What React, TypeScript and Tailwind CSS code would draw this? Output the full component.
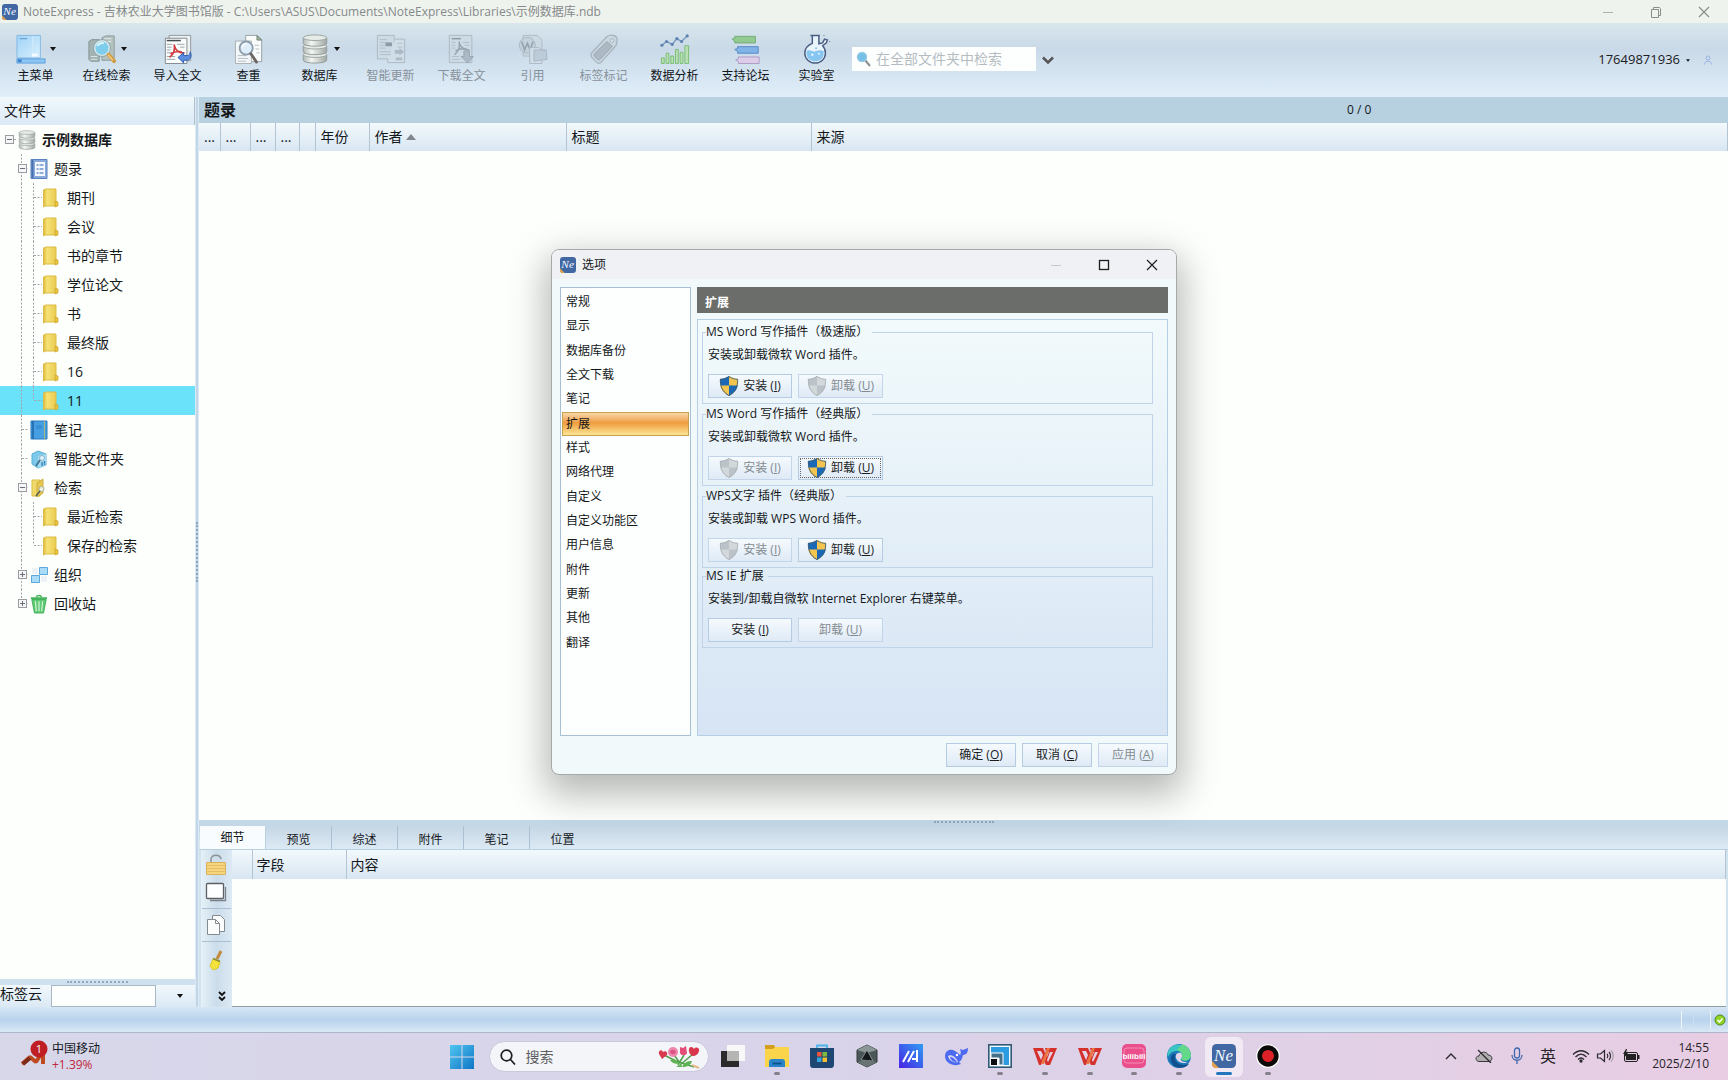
import { useState, type ReactNode } from 'react'
import clsx from 'clsx'

type IconProps = { className?: string }

/* ---------- Toolbar icons ---------- */

const MainMenuIcon = () => (
  <svg viewBox="0 0 32 32" className="size-[30px]">
    <defs>
      <linearGradient id="mm" x1="0" y1="0" x2="1" y2="1">
        <stop offset="0" stopColor="#9fd2f7" />
        <stop offset="1" stopColor="#d9f0fd" />
      </linearGradient>
    </defs>
    <path d="M1 1.500h25v24H1z" fill="url(#mm)" stroke="#83b8e2" />
    <path d="M18 2v23" stroke="#cfeafc" strokeWidth="1.500" />
    <path d="M4 5h8" stroke="#5d93c8" />
    <path d="M17 21h6v3h-6z" fill="#f7fdff" />
    <path d="M1 26.500h30V31H1z" fill="#8cc6f5" stroke="#5b9fdc" />
    <path d="M2 27h4v3H2z" fill="#3d83cb" />
  </svg>
)

const OnlineSearchIcon = () => (
  <svg viewBox="0 0 32 32" className="size-[30px]">
    <path d="M2 8l3-2h8v23H4l-2-2z" fill="#a3b3b3" stroke="#849494" />
    <path d="M16 4l4-2h9v24l-3 2H16z" fill="#b4c2c0" stroke="#8a9a98" />
    <path d="M18 5h8M18 8h8M4 24h7M4 27h7" stroke="#dfe8e6" />
    <circle cx="16" cy="15" r="8" fill="#7fcdec" stroke="#dbe8ea" strokeWidth="2" />
    <circle cx="16" cy="15" r="9" fill="none" stroke="#7b98a3" strokeWidth=".8" />
    <path d="M11 13a6 6 0 0 1 7-3" stroke="#d8f4fd" strokeWidth="2" fill="none" />
    <path d="M23 22l6 7" stroke="#d39a3d" strokeWidth="4" strokeLinecap="round" />
    <path d="M22.500 22l5 6" stroke="#f4d58b" strokeWidth="1.300" />
  </svg>
)

const ImportPdfIcon = () => (
  <svg viewBox="0 0 32 32" className="size-[30px]">
    <path d="M6.500 1.500h23v27h-23z" fill="#eef2f3" stroke="#8d9699" />
    <path d="M2.500 4.500h23v27h-23z" fill="#fbfdfd" stroke="#7c8589" />
    <path d="M4 7h15" stroke="#454b4e" strokeWidth="1.600" />
    <path d="M4 11h6M4 14h5M4 17h4M4 20h5M4 24h9M4 27h9M15 11h8M18 14h5" stroke="#98a0a4" />
    <path d="M12 11c1 6-1 11-5 14M12 12c1 5 5 9 11 8M8 21c4-2 8-3 12-2" stroke="#d13a3f" strokeWidth="1.700" fill="none" />
    <path d="M16 25l6-5v3h4c2 0 3-2 3-4 2 4 1 8-3 9h-4v3z" fill="#5b8ede" stroke="#2c57b0" />
  </svg>
)

const DuplicateIcon = () => (
  <svg viewBox="0 0 32 32" className="size-[30px]">
    <path d="M12.500 1.500h12l5 5v23h-17z" fill="#fafcfc" stroke="#93a0a3" />
    <path d="M24.500 1.500v5h5z" fill="#a4b7a6" stroke="#6f8071" />
    <path d="M1.500 7.500h17v24h-17z" fill="#f4f7f7" stroke="#a5aeb1" />
    <path d="M4 23h9M4 26h11M4 29h9M22 12h5M23 16h4M24 20h3" stroke="#b3bdc0" />
    <circle cx="13" cy="15" r="7" fill="#dfeefb" stroke="#8e9dad" strokeWidth="2" />
    <path d="M9 14a5 5 0 0 1 5-4" stroke="#fff" strokeWidth="1.500" fill="none" />
    <path d="M18 21l6 9" stroke="#6d6660" strokeWidth="3" strokeLinecap="round" />
  </svg>
)

const DatabaseIcon = ({ className = 'size-[30px]' }: IconProps) => (
  <svg viewBox="0 0 32 32" className={className}>
    <defs>
      <linearGradient id="cyl">
        <stop offset="0" stopColor="#b3bab5" />
        <stop offset=".35" stopColor="#f3f6f2" />
        <stop offset="1" stopColor="#a0a8a4" />
      </linearGradient>
    </defs>
    {[22, 13, 4].map((y) => (
      <g key={y}>
        <path d={`M3.5 ${y}v6c0 4 25 4 25 0v-6z`} fill="url(#cyl)" stroke="#929c99" />
        <ellipse cx="16" cy={y} rx="12.500" ry="3" fill="#e6ebe7" stroke="#9aa4a1" />
      </g>
    ))}
  </svg>
)

const SmartUpdateIcon = () => (
  <svg viewBox="0 0 32 32" className="size-[30px] opacity-80">
    <path d="M1.500 1.500h18v25h-18z" fill="#cddbe5" stroke="#a2b0bc" />
    <path d="M20.500 5.500h10v25h-18v-4" fill="#d2dfe8" stroke="#a2b0bc" />
    <path d="M4 6h8M4 9h6M4 12h5M4 15h6M4 19h12M4 22h12M23 10h5M23 14h5" stroke="#a9b6c1" />
    <path d="M10 9h7v4h-7z" fill="#7d8a96" />
    <path d="M20 17h5v-2l5 4-5 4v-2h-5zM21 25h7v3h-7z" fill="#a5b2be" />
  </svg>
)

const DownloadTextIcon = () => (
  <svg viewBox="0 0 32 32" className="size-[30px] opacity-80">
    <path d="M2.500 1.500h24v29h-24z" fill="#cddbe5" stroke="#a2b0bc" />
    <path d="M5 5h10" stroke="#7f8c97" strokeWidth="1.600" />
    <path d="M5 9h4M5 12h4M5 15h4M5 24h8M5 27h9M17 9h7M19 12h5" stroke="#a9b6c1" />
    <path d="M13 8c1 6-1 11-5 14M13 9c1 5 5 8 11 8M9 18c4-2 8-3 12-2" stroke="#8d99a5" strokeWidth="1.700" fill="none" />
    <path d="M18 18h6v6h4l-6 7-7-7h3z" fill="#a3b0bc" stroke="#8c9aa6" />
  </svg>
)

const CiteIcon = () => (
  <svg viewBox="0 0 32 32" className="size-[30px] opacity-80">
    <path d="M5.500 1.500h15l5 5v17h-20z" fill="#ccd9e3" stroke="#a5b2bd" />
    <circle cx="10" cy="12" r="8.500" fill="#c3d0db" stroke="#9fadb9" />
    <path d="M4 8l3 9 3-7 3 7 3-9" stroke="#8997a4" strokeWidth="1.800" fill="none" />
    <path d="M12.500 14.500h10l3 3v14h-13z" fill="#d5e0e8" stroke="#a2b0bc" />
    <path d="M17 17h13l1 10-14 2z" fill="#b9c8d4" stroke="#a0aebb" />
  </svg>
)

const TagIcon = () => (
  <svg viewBox="0 0 32 32" className="size-[30px] opacity-80">
    <path d="M3 20L19 3c3-3 10-2 11 2 0 3 0 6-2 8L13 30c-2 2-4 1-5 0l-5-5c-1-2-1-4 0-5z" fill="#cbd6df" stroke="#a0adb8" strokeWidth="1.500" />
    <path d="M6 21L19 8l6 5-13 14c-1 1-2 1-3 0l-3-3c-1-1-1-2 0-3z" fill="#a5b1bb" stroke="#8d9aa5" />
    <circle cx="24.500" cy="7" r="2" fill="#dce6ed" stroke="#98a6b2" />
  </svg>
)

const AnalyticsIcon = () => (
  <svg viewBox="0 0 32 32" className="size-[30px]">
    <path d="M2 12l5-4 6 3 5-6 5 3 6-6" stroke="#7294bd" strokeWidth="1.400" fill="none" />
    {[[2, 12], [7, 8], [13, 11], [18, 5], [23, 8], [29, 2]].map(([x, y]) => (
      <circle key={x} cx={x} cy={y} r="1.700" fill="#5f83b1" />
    ))}
    <path
      d="M1.500 25.500h3v6h-3zM6.500 20.500h3v11h-3zM11.500 23.500h3v8h-3zM16.500 16.500h3v15h-3zM21.500 19.500h3v12h-3zM26.500 12.500h4v19h-4z"
      fill="#b9e0b2"
      stroke="#78bd72"
    />
  </svg>
)

const ForumIcon = () => (
  <svg viewBox="0 0 32 32" className="size-[30px]">
    <path d="M1 5.500l3-1v-2h22v7H4v-2z" fill="#92ca90" stroke="#71ab76" />
    <path d="M4 16.500l3-1v-2h22v7H7v-2z" fill="#82b3e8" stroke="#5687c6" />
    <path d="M5 27.500l3-1v-2h22v7H8v-2z" fill="#dccde9" stroke="#ad98c4" />
  </svg>
)

const LabIcon = () => (
  <svg viewBox="0 0 32 32" className="size-[30px]">
    <path
      d="M9 1.500h10M11 2v8C6 12 3 16 3 20.500a11 10.500 0 0 0 22 0c0-3-1-6-3-8l4-3 1-3-3-1-2 4-4 1V2"
      fill="#e8f3fb"
      stroke="#4b5f82"
      strokeWidth="1.600"
    />
    <path d="M5 18c4-2 6 2 10 0 3-1 5-1 8 0 1 7-3 11-9 11S4 25 5 18z" fill="#88c6f2" />
    <circle cx="11" cy="22" r="1.300" fill="#e9f7ff" />
    <circle cx="15" cy="15" r="1" fill="#6fb3e6" />
    <circle cx="18" cy="21" r="1" fill="#e9f7ff" />
    <path d="M23 2l1-1M29 8h1" stroke="#58698a" />
  </svg>
)

const NeLogo = ({ className }: IconProps) => (
  <svg viewBox="0 0 24 24" className={className}>
    <rect width="24" height="24" rx="4.500" fill="#4168a3" />
    <path d="M0 17l7 7H4a4 4 0 0 1-4-4z" fill="#e4a44a" />
    <text x="11.500" y="17" textAnchor="middle" fontSize="17" fontStyle="italic" fontFamily="Liberation Serif, serif" fill="#f2f7ff">
      Ne
    </text>
  </svg>
)

/* ---------- Tree icons ---------- */

const FolderIcon = () => (
  <svg viewBox="0 0 16 20" className="h-5 w-4">
    <defs>
      <linearGradient id="fold">
        <stop offset="0" stopColor="#dcbc3e" />
        <stop offset=".3" stopColor="#f6e276" />
        <stop offset="1" stopColor="#e9cb51" />
      </linearGradient>
    </defs>
    <path d="M.500 2L3 1h10v17H2L.500 19z" fill="url(#fold)" stroke="#dcbb45" />
    <path d="M12 13l3 1v4l-3 1z" fill="#e8c340" stroke="#cfa42d" strokeWidth=".7" />
  </svg>
)

const RecordsIcon = () => (
  <svg viewBox="0 0 18 20" className="h-5 w-[18px]">
    <path d="M1 .500h16v19H1z" fill="#8aaadb" stroke="#5a80bd" />
    <path d="M5 3h10v14H5z" fill="#f4f9ff" />
    <path d="M2.500 1v18" stroke="#4871b2" strokeWidth="2" />
    <path d="M6.500 6h2M6.500 10h2M6.500 14h2M9.500 6h4M9.500 10h4M9.500 14h4" stroke="#6f93cb" strokeWidth="1.300" />
  </svg>
)

const NotesIcon = () => (
  <svg viewBox="0 0 18 20" className="h-5 w-[18px]">
    <path d="M1 1h16v18H1z" fill="#469fe3" stroke="#2b78bd" />
    <path d="M3 1v18" stroke="#1e64a5" strokeWidth="1.500" />
    <path d="M14.500 1v18" stroke="#a8b87d" />
    <path d="M6 6h6M6 8h6" stroke="#2f7fc6" />
  </svg>
)

const SmartFolderIcon = () => (
  <svg viewBox="0 0 18 20" className="h-5 w-[18px]">
    <path d="M2 5l6-3 8 3v11l-8 3-6-4z" fill="#7cc9ea" stroke="#56aed6" />
    <path d="M8 7l8-2v11l-8 3z" fill="#a5dcf3" />
    <circle cx="12" cy="9" r="2.500" fill="#dff3fb" stroke="#8fb6ca" />
    <path d="M10 11l-4 6" stroke="#43708b" strokeWidth="1.700" />
    <path d="M12 13v4M14.500 12v4" stroke="#3d87ba" strokeWidth="1.500" />
  </svg>
)

const SearchFolderIcon = () => (
  <svg viewBox="0 0 18 20" className="h-5 w-[18px]">
    <path d="M2 2h8v16H2z" fill="#f0da6c" stroke="#d9bc48" />
    <path d="M7 5l6-4v14l-6 4z" fill="#e5c850" stroke="#cfae3b" />
    <circle cx="11.500" cy="11" r="2.500" fill="#e9efdf" stroke="#a9b19a" />
    <path d="M10 13l-4 5" stroke="#55605a" strokeWidth="1.500" />
  </svg>
)

const OrgIcon = () => (
  <svg viewBox="0 0 18 20" className="h-5 w-[18px]">
    <path d="M9.500 2.500h8v7h-8zM1.500 10.500h8v7h-8z" fill="#a9dcf8" stroke="#5fa8dc" />
    <path d="M2 3h6v6H2zM11 11h6v6h-6z" fill="#edf2f6" />
  </svg>
)

const TrashIcon = () => (
  <svg viewBox="0 0 20 22" className="h-[22px] w-[18px]">
    <path d="M2 6h16l-3 15H5z" fill="#5fc973" stroke="#3bab53" />
    <path d="M1 4.500h18M7 3c1-2 5-2 6 0" stroke="#45b55c" strokeWidth="1.800" fill="none" />
    <path d="M6 8l1 11M10 8v11M14 8l-1 11" stroke="#d5f5d9" strokeWidth="1.300" />
  </svg>
)

const MagnifierIcon = () => (
  <svg viewBox="0 0 16 16" className="h-4 w-4 shrink-0">
    <path d="M9 9l5 6" stroke="#8d8f90" strokeWidth="2" />
    <circle cx="6" cy="6" r="4.500" fill="#76bfe6" stroke="#94c9e4" strokeWidth="1.500" />
  </svg>
)

const ShieldIcon = ({ muted }: { muted?: boolean }) => {
  const blue = muted ? '#bcc3c8' : '#1b69b6'
  const gold = muted ? '#d3d8db' : '#f4c54e'
  return (
    <svg viewBox="0 0 20 20" className="h-5 w-5 shrink-0">
      <path d="M10 0C7 2 4 3 1 3c0 8 2 13 9 17z" fill={blue} />
      <path d="M10 0c3 2 6 3 9 3 0 8-2 13-9 17z" fill={gold} />
      <path d="M1.200 9.500H10V20C5 17 2 14 1.200 9.500z" fill={gold} />
      <path d="M18.800 9.500H10V20c5-3 8-6 8.800-10.500z" fill={blue} />
      <path d="M10 .500C7 2.500 4 3.300 1.300 3.300c0 7 1.700 12.200 8.700 16.200 7-4 8.700-9.200 8.700-16.200C16 3.300 13 2.500 10 .500z" fill="none" stroke={muted ? '#aab2b8' : '#3e5b70'} strokeWidth=".9" />
    </svg>
  )
}

/* ---------- Data ---------- */

interface Tool {
  label: string
  icon: ReactNode
  menu?: boolean
  disabled?: boolean
}

const tools: Tool[] = [
  { label: '主菜单', icon: <MainMenuIcon />, menu: true },
  { label: '在线检索', icon: <OnlineSearchIcon />, menu: true },
  { label: '导入全文', icon: <ImportPdfIcon /> },
  { label: '查重', icon: <DuplicateIcon /> },
  { label: '数据库', icon: <DatabaseIcon />, menu: true },
  { label: '智能更新', icon: <SmartUpdateIcon />, disabled: true },
  { label: '下载全文', icon: <DownloadTextIcon />, disabled: true },
  { label: '引用', icon: <CiteIcon />, disabled: true },
  { label: '标签标记', icon: <TagIcon />, disabled: true },
  { label: '数据分析', icon: <AnalyticsIcon /> },
  { label: '支持论坛', icon: <ForumIcon /> },
  { label: '实验室', icon: <LabIcon /> },
]

interface Node {
  label: string
  level: 0 | 1 | 2
  icon: ReactNode
  box?: '+' | '-'
  last?: boolean
}

const nodes: Node[] = [
  { label: '示例数据库', level: 0, icon: <DatabaseIcon className="h-5 w-5" />, box: '-' },
  { label: '题录', level: 1, icon: <RecordsIcon />, box: '-' },
  { label: '期刊', level: 2, icon: <FolderIcon /> },
  { label: '会议', level: 2, icon: <FolderIcon /> },
  { label: '书的章节', level: 2, icon: <FolderIcon /> },
  { label: '学位论文', level: 2, icon: <FolderIcon /> },
  { label: '书', level: 2, icon: <FolderIcon /> },
  { label: '最终版', level: 2, icon: <FolderIcon /> },
  { label: '16', level: 2, icon: <FolderIcon /> },
  { label: '11', level: 2, icon: <FolderIcon />, last: true },
  { label: '笔记', level: 1, icon: <NotesIcon /> },
  { label: '智能文件夹', level: 1, icon: <SmartFolderIcon /> },
  { label: '检索', level: 1, icon: <SearchFolderIcon />, box: '-' },
  { label: '最近检索', level: 2, icon: <FolderIcon /> },
  { label: '保存的检索', level: 2, icon: <FolderIcon />, last: true },
  { label: '组织', level: 1, icon: <OrgIcon />, box: '+' },
  { label: '回收站', level: 1, icon: <TrashIcon />, box: '+', last: true },
]

const sections = [
  '常规', '显示', '数据库备份', '全文下载', '笔记', '扩展', '样式', '网络代理',
  '自定义', '自定义功能区', '用户信息', '附件', '更新', '其他', '翻译',
]

const plugins = [
  { title: 'MS Word 写作插件（极速版）', text: '安装或卸载微软 Word 插件。', shield: true, install: true, remove: false },
  { title: 'MS Word 写作插件（经典版）', text: '安装或卸载微软 Word 插件。', shield: true, install: false, remove: true, focus: true },
  { title: 'WPS文字 插件（经典版）', text: '安装或卸载 WPS Word 插件。', shield: true, install: false, remove: true },
  { title: 'MS IE 扩展', text: '安装到/卸载自微软 Internet Explorer 右键菜单。', shield: false, install: true, remove: false },
]

const columns = [
  { label: '...', width: 'w-[21px]' },
  { label: '...', width: 'w-[30px]' },
  { label: '...', width: 'w-[25px]' },
  { label: '...', width: 'w-[24px]' },
  { label: '', width: 'w-4' },
  { label: '年份', width: 'w-[54px]' },
  { label: '作者', width: 'w-[197px]', sorted: true },
  { label: '标题', width: 'w-[245px]' },
  { label: '来源', width: '' },
]

const tabs = ['细节', '预览', '综述', '附件', '笔记', '位置']

/* ---------- Shared bits ---------- */

const Caret = () => (
  <svg viewBox="0 0 6 4" className="h-1 w-1.5 shrink-0">
    <path d="M0 0h6L3 4z" fill="#111" />
  </svg>
)

const WindowButtons = ({ dialog }: { dialog?: boolean }) => {
  const stroke = dialog ? '#1c1c1c' : '#8b8d8b'
  return (
    <div className="flex items-center">
      <button aria-label="最小化" className="flex w-12 justify-center">
        <svg viewBox="0 0 12 12" className="h-3 w-3">
          <path d="M1 6.500h10" stroke={dialog ? '#c5c8ca' : '#aeb1ae'} />
        </svg>
      </button>
      <button aria-label="最大化" className="flex w-12 justify-center">
        <svg viewBox="0 0 12 12" className="h-3 w-3" fill="none" stroke={stroke}>
          {dialog ? (
            <rect x="1.500" y="1.500" width="9" height="9" strokeWidth="1.300" />
          ) : (
            <path d="M1.500 3.500h7v8h-7zM3.500 3V1.500h6l1 1v7H9" />
          )}
        </svg>
      </button>
      <button aria-label="关闭" className="flex w-12 justify-center">
        <svg viewBox="0 0 12 12" className="h-3 w-3">
          <path d="M1 1l10 10M11 1L1 11" stroke={stroke} strokeWidth="1.200" />
        </svg>
      </button>
    </div>
  )
}

const Keyed = ({ text, hotkey }: { text: string; hotkey: string }) => (
  <span>
    {text} (<span className="underline">{hotkey}</span>)
  </span>
)

const PushButton = ({ text, hotkey, disabled, width, children }: {
  text: string
  hotkey: string
  disabled?: boolean
  width: string
  children?: ReactNode
}) => (
  <button
    disabled={disabled}
    className={clsx(
      'flex h-6 items-center justify-center gap-1 border border-[#b5cbe2] bg-linear-to-b from-[#f5fafd] to-[#dfeaf6] leading-4 text-[#1b1d1f] disabled:border-[#c3d5e8] disabled:text-[#848b90]',
      width
    )}
  >
    {children}
    <Keyed text={text} hotkey={hotkey} />
  </button>
)

/* ---------- Main window ---------- */

const Toolbar = () => (
  <div className="flex h-[74px] shrink-0 bg-linear-to-b from-[#d8e6ec] via-[#c9d9e7] via-35% to-[#e0effa]">
    {tools.map((tool) => (
      <button
        key={tool.label}
        disabled={tool.disabled}
        className="flex w-[71px] flex-col items-center gap-1 pt-[11px] leading-4 text-[#101418] disabled:text-[#87919a]"
      >
        <span className="flex items-center gap-1">
          {tool.icon}
          {tool.menu && <Caret />}
        </span>
        {tool.label}
      </button>
    ))}
    <div className="mt-6 flex h-6 w-[184px] items-center gap-1 bg-[#fdfffe] px-1">
      <MagnifierIcon />
      <input
        aria-label="在全部文件夹中检索"
        placeholder="在全部文件夹中检索"
        className="w-full bg-transparent text-sm leading-5 outline-none placeholder:text-[#b4bcc2]"
      />
    </div>
    <button aria-label="检索选项" className="ml-1.5 flex items-center">
      <svg viewBox="0 0 12 8" className="h-2 w-3">
        <path d="M1 1.500l5 5 5-5" stroke="#555" strokeWidth="2.500" fill="none" />
      </svg>
    </button>
    <button className="ml-auto flex items-center gap-1.5 text-[13px] text-[#1c2024]">
      17649871936
      <svg viewBox="0 0 6 4" className="h-[3px] w-1"><path d="M0 0h6L3 4z" fill="#111" /></svg>
    </button>
    <button aria-label="账户" className="mr-4 ml-3.5 flex items-center">
      <svg viewBox="0 0 8 10" className="h-2.5 w-2" fill="none" stroke="#9ab3e6">
        <circle cx="4" cy="3" r="2" />
        <path d="M.500 9.500C1 5 7 5 7.500 9.500" />
      </svg>
    </button>
  </div>
)

const TreeGuide = ({ node, index }: { node: Node; index: number }) => {
  const { level, box, last } = node
  const width = level === 0 ? 17 : level === 1 ? 30 : 43
  const boxX = level === 0 ? 5 : 18
  const trunkEnd = index === nodes.length - 1 ? 14 : 29
  return (
    <svg width={width} height={29} viewBox={`0 0 ${width} 29`} className="shrink-0" fill="none">
      <g stroke="#a3a3a9" strokeDasharray="2 1.500">
        {level > 0 && <path d={`M21.500 0V${trunkEnd}`} />}
        {level === 1 && <path d="M22 14.500h7" />}
        {level === 0 && <path d="M14 14.500h3" />}
        {level === 2 && <path d={`M33.500 0V${last ? 14 : 29}M34 14.500h8`} />}
      </g>
      {box && (
        <g stroke="#9a9ca1">
          <rect x={boxX + 0.5} y="10.500" width="8" height="8" fill="#f5f6f8" />
          <path d={`M${boxX + 2} 14.500h5`} stroke="#6b6f75" />
          {box === '+' && <path d={`M${boxX + 4.5} 12v5`} stroke="#6b6f75" />}
        </g>
      )}
    </svg>
  )
}

const Sidebar = () => {
  const [selected, setSelected] = useState('11')
  return (
    <aside className="flex w-[195px] shrink-0 flex-col">
      <div className="flex h-7 shrink-0 items-center border-r border-[#aebfce] bg-linear-to-b from-[#f1f8fc] to-[#dbe9f5] pl-1 text-sm">
        文件夹
      </div>
      <ul className="flex-1 overflow-hidden bg-[#fdfffc] text-sm">
        {nodes.map((node, index) => (
          <li key={node.label}>
            <button
              onClick={() => setSelected(node.label)}
              className={clsx(
                'flex h-[29px] w-full items-center text-left leading-5',
                node.label === selected && 'bg-[#6ae2f9]',
                node.level === 0 && 'font-bold'
              )}
            >
              <TreeGuide node={node} index={index} />
              <span className={clsx('flex shrink-0 items-center', node.level === 0 ? 'w-[25px]' : 'w-6')}>{node.icon}</span>
              {node.label}
            </button>
          </li>
        ))}
      </ul>
      <div className="flex h-1.5 items-center justify-center bg-[#cfe1ee]">
        <span className="w-[61px] border-t-2 border-dotted border-[#92aac0]" />
      </div>
      <div className="flex h-[22px] items-center bg-linear-to-b from-[#f1f8fc] to-[#dbe9f5]">
        <label htmlFor="tag-cloud" className="w-[51px] pb-1 text-sm leading-4">标签云</label>
        <input id="tag-cloud" className="h-[22px] w-[105px] border border-[#a9b7c4] bg-[#fdfffe] px-1 outline-none" />
        <button aria-label="展开标签云" className="flex h-full flex-1 items-center justify-center pl-2"><Caret /></button>
      </div>
    </aside>
  )
}

const DetailTools = () => (
  <div className="flex w-[31px] shrink-0 flex-col items-center bg-linear-to-r from-[#e6f1f8] via-[#cbdcea] to-[#dceaf4] pr-px">
    <button aria-label="锁定" className="py-1">
      <svg viewBox="0 0 22 22" className="h-[22px] w-[22px]">
        <path d="M6 9V5c1-5 9-5 10 0" stroke="#8c9399" strokeWidth="1.500" fill="none" />
        <path d="M1.500 8.500h19v12h-19z" fill="#f6d67c" stroke="#d8b25c" />
        <path d="M2 11.500h18M2 14.500h18M2 17.500h18" stroke="#e6bd64" />
      </svg>
    </button>
    <button aria-label="窗口" className="pt-0.5 pb-1.5">
      <svg viewBox="0 0 22 20" className="h-5 w-[22px]">
        <path d="M5 18.500h15.500V5" stroke="#7c8086" strokeWidth="1.300" fill="none" />
        <rect x="1.500" y="1.500" width="17" height="15" rx="1" fill="#fdfeff" stroke="#5c6066" strokeWidth="1.300" />
      </svg>
    </button>
    <hr className="w-[29px] border-[#aabfd2]" />
    <button aria-label="复制" className="py-1.5">
      <svg viewBox="0 0 20 20" className="h-5 w-5" fill="#fbfdfd" stroke="#868b90">
        <path d="M6.500.500h8l4 4v12h-12z" />
        <path d="M1.500 4.500h8l4 4v11h-12z" />
        <path d="M9.500 4.500v4h4" fill="none" />
      </svg>
    </button>
    <hr className="w-[29px] border-[#aabfd2]" />
    <button aria-label="清除" className="py-2">
      <svg viewBox="0 0 14 20" className="h-5 w-3.5">
        <path d="M12 1L8 9" stroke="#c08b3c" strokeWidth="3" />
        <path d="M4 9l7 3-2 6-5 2-3-4z" fill="#f3e23c" stroke="#d9c626" />
        <path d="M4 8.500l7 3" stroke="#8e8a2b" strokeWidth="1.500" />
      </svg>
    </button>
    <button aria-label="更多" className="mt-auto mb-1.5 pl-3">
      <svg viewBox="0 0 8 10" className="h-2.5 w-2" fill="none" stroke="#111" strokeWidth="1.800">
        <path d="M1 1l3 3 3-3M1 6l3 3 3-3" />
      </svg>
    </button>
  </div>
)

const DetailPane = () => {
  const [active, setActive] = useState('细节')
  return (
    <section className="flex h-[187px] shrink-0 flex-col border-t border-[#c6d8e6] bg-[#d2e3f0]">
      <div className="flex h-[5px] shrink-0 items-start justify-center bg-[#c4d7e6]">
        <span className="w-[60px] border-t-2 border-dotted border-[#8fa6bb]" />
      </div>
      <div role="tablist" className="flex h-6 shrink-0 border-b border-[#b6cfe1] bg-linear-to-b from-[#c5d6e4] to-[#dceaf5] pl-px">
        {tabs.map((tab) => (
          <button
            key={tab}
            role="tab"
            aria-selected={tab === active}
            onClick={() => setActive(tab)}
            className={clsx(
              'w-[66px] border-r leading-4',
              tab === active ? 'border-[#b6cfe1] bg-[#f8fcfe]' : 'border-[#abc0d3] pt-1 last:border-transparent'
            )}
          >
            {tab}
          </button>
        ))}
      </div>
      <div className="flex min-h-0 flex-1 pr-0.5 pl-0.5">
        <DetailTools />
        <div className="flex-1 border-b border-[#8f9aa3] bg-[#fdfffc]">
          <table className="w-full table-fixed text-sm leading-5">
            <thead>
              <tr className="h-[29px] bg-linear-to-b from-[#f3f9fc] to-[#d8e6f2] text-left">
                <th className="w-5 border-r border-[#b4c4d2]" />
                <th className="w-[94px] border-r border-[#b4c4d2] pl-1 font-normal">字段</th>
                <th className="border-r border-[#b4c4d2] pl-1 font-normal">内容</th>
              </tr>
            </thead>
          </table>
        </div>
      </div>
    </section>
  )
}

/* ---------- Options dialog ---------- */

const OptionsDialog = () => {
  const [section, setSection] = useState('扩展')
  return (
    <div className="pointer-events-none absolute inset-0 flex justify-center pt-[249px]">
      <div
        role="dialog"
        aria-labelledby="options-title"
        className="pointer-events-auto flex h-[526px] w-[626px] flex-col overflow-hidden rounded-lg border border-[#a4aaaa] bg-[#f2f9fb] shadow-[0_14px_36px_6px_rgba(0,0,0,0.28)]"
      >
        <div className="flex h-[29px] shrink-0 items-center gap-1.5 bg-[#eff1f4] pl-2">
          <NeLogo className="h-4 w-4" />
          <h2 id="options-title" className="leading-4">选项</h2>
          <div className="ml-auto"><WindowButtons dialog /></div>
        </div>
        <div className="flex min-h-0 flex-1 gap-1.5 px-2 pt-2">
          <nav className="w-[131px] shrink-0 border border-[#a9bfd4] bg-[#fdfffe] px-px pt-0.5">
            <ul className="grid h-[365px] auto-rows-fr">
              {sections.map((item) => (
                <li key={item} className="flex">
                  <button
                    onClick={() => setSection(item)}
                    className={clsx(
                      'w-full border px-[3px] text-left leading-4',
                      item === section
                        ? 'border-[#c8a14d] bg-linear-to-b from-[#f8d7a8] via-[#ee9c3c] via-45% to-[#fbe694]'
                        : 'border-transparent'
                    )}
                  >
                    {item}
                  </button>
                </li>
              ))}
            </ul>
          </nav>
          <div className="flex min-w-0 flex-1 flex-col gap-1.5">
            <h3 className="flex h-[26px] shrink-0 items-center bg-[#6b6d6a] pt-1.5 pl-2 font-bold text-white">{section}</h3>
            <div className="flex-1 border border-[#b7cfe5] bg-linear-to-b from-[#f2fafb] to-[#d6e4f4] pt-1 pr-[14px] pl-1">
              {plugins.map((plugin) => (
                <fieldset key={plugin.title} className="mb-0.5 h-20 border border-[#bfd4e8] pl-[5px] last:-mt-0.5">
                  <legend className="-ml-0.5 pr-1 leading-4">{plugin.title}</legend>
                  <p className="mt-[5px] leading-5">{plugin.text}</p>
                  <div className="mt-[9px] flex gap-1.5">
                    <PushButton text="安装" hotkey="I" width="w-[84px]" disabled={!plugin.install}>
                      {plugin.shield && <ShieldIcon muted={!plugin.install} />}
                    </PushButton>
                    <span className={clsx(plugin.focus && 'outline outline-dotted outline-[#666] -outline-offset-3')}>
                      <PushButton text="卸载" hotkey="U" width="w-[85px]" disabled={!plugin.remove}>
                        {plugin.shield && <ShieldIcon muted={!plugin.remove} />}
                      </PushButton>
                    </span>
                  </div>
                </fieldset>
              ))}
            </div>
          </div>
        </div>
        <div className="flex shrink-0 justify-end gap-1.5 px-2 pt-[7px] pb-[7px]">
          <PushButton text="确定" hotkey="O" width="w-[70px]" />
          <PushButton text="取消" hotkey="C" width="w-[70px]" />
          <PushButton text="应用" hotkey="A" width="w-[70px]" disabled />
        </div>
      </div>
    </div>
  )
}

/* ---------- Taskbar ---------- */

const WpsIcon = () => (
  <svg viewBox="0 0 24 24" className="h-6 w-6">
    <path d="M0 4h10l4 9 2-5h-3l-1-4h12l-7 17h-4l-3-6-2 6H6z" fill="#d4312d" />
    <path d="M4 7l4 9 2-5-2-4zM17 8l-3 8 1 2 5-10z" fill="#e5d3e8" />
    <path d="M8 20l6-16h3l-6 16z" fill="#ea7442" />
  </svg>
)

const apps: { name: string; running?: boolean; active?: boolean; icon: ReactNode }[] = [
  {
    name: '任务视图',
    icon: (
      <svg viewBox="0 0 24 24" className="h-6 w-6">
        <rect x="6" y="1" width="18" height="16" fill="#f8f8f8" />
        <rect x="0" y="7" width="18" height="16" fill="#2b2b2b" />
        <rect x="6" y="7" width="12" height="10" fill="#b5b5b3" />
      </svg>
    ),
  },
  {
    name: '文件资源管理器',
    running: true,
    icon: (
      <svg viewBox="0 0 24 24" className="h-6 w-6">
        <path d="M0 1h9l2 3h10v4H0z" fill="#d39c22" />
        <path d="M0 5h8l2-2h14v20H0z" fill="#fad44b" />
        <path d="M4 23v-5c0-2 1-3 3-3h10c2 0 3 1 3 3v5z" fill="#2a84c9" />
        <path d="M7.500 19.500h9" stroke="#0f4f8c" strokeWidth="1.800" />
      </svg>
    ),
  },
  {
    name: 'Microsoft Store',
    icon: (
      <svg viewBox="0 0 24 24" className="h-6 w-6">
        <path d="M7 5V1.500h10V5" fill="none" stroke="#4bb5e8" strokeWidth="1.800" />
        <path d="M0 4h24v16c0 3-1 4-3 4H3c-2 0-3-1-3-4z" fill="#1e4773" />
        <path d="M7 8h4.500v4.500H7z" fill="#e8543a" />
        <path d="M12.500 8H17v4.500h-4.500z" fill="#7db93c" />
        <path d="M7 13.500h4.500V18H7z" fill="#36a3df" />
        <path d="M12.500 13.500H17V18h-4.500z" fill="#f4bd32" />
      </svg>
    ),
  },
  {
    name: '奥创中心',
    icon: (
      <svg viewBox="0 0 24 24" className="h-6 w-6">
        <path d="M12 1l10 5v12l-10 5-10-5V6z" fill="#4a5657" stroke="#303a3b" />
        <path d="M12 1l10 5-10 3L2 6z" fill="#8b9796" />
        <path d="M12 6l6 11-12-1z" fill="#15191a" stroke="#98a4a3" strokeWidth=".8" />
        <path d="M2 18l10-2 10 2-10 5z" fill="#687473" />
      </svg>
    ),
  },
  {
    name: 'MyASUS',
    icon: (
      <svg viewBox="0 0 24 24" className="h-6 w-6">
        <defs>
          <linearGradient id="asus" x1="0" y1="1" x2="1" y2="0">
            <stop offset="0" stopColor="#4a22e4" />
            <stop offset="1" stopColor="#2e9df4" />
          </linearGradient>
        </defs>
        <rect width="24" height="24" fill="url(#asus)" />
        <path d="M4 18L10 7M9 18l6-11M13 15h4M18 6v12" stroke="#fff" strokeWidth="2" />
      </svg>
    ),
  },
  {
    name: 'DeepSeek',
    icon: (
      <svg viewBox="0 0 24 24" className="h-6 w-6">
        <path d="M1 12c0-5 5-8 10-5 2 1 4 3 5 4 1-1 1-4 0-6l3 1 5-2c0 5-2 7-5 7-1 4-2 6-4 7l2 2c-6 3-16 0-16-8z" fill="#4d6bf0" />
        <path d="M4 12c3-2 8 1 10 6-4 1-9-1-10-6z" fill="#d9d6f2" />
        <path d="M6 13c3 0 5 2 7 5-3 0-6-1-7-5z" fill="#4d6bf0" />
        <circle cx="13" cy="11" r="1.200" fill="#fff" />
      </svg>
    ),
  },
  {
    name: '屏幕工具',
    running: true,
    icon: (
      <svg viewBox="0 0 24 24" className="h-6 w-6">
        <rect x=".8" y=".8" width="22.400" height="22.400" fill="#f5fbfe" stroke="#2f5a76" strokeWidth="1.600" />
        <path d="M3 3h18v18h-6V9H3z" fill="#2d9be0" />
        <path d="M3 9h12v12h-4v-7H3z" fill="#466f8a" stroke="#fff" />
        <rect x="3" y="15" width="6" height="6" fill="#0b0d10" />
      </svg>
    ),
  },
  { name: 'WPS Office', running: true, icon: <WpsIcon /> },
  { name: 'WPS 文字', running: true, icon: <WpsIcon /> },
  {
    name: '哔哩哔哩',
    running: true,
    icon: (
      <svg viewBox="0 0 24 24" className="h-6 w-6">
        <rect width="24" height="24" rx="5" fill="#ea4f8b" />
        <rect x="2" y="4" width="20" height="15" rx="3" fill="none" stroke="#f58bb4" />
        <text x="12" y="15" textAnchor="middle" fontSize="8" fontWeight="bold" fontFamily="Liberation Sans, sans-serif" fill="#fff">
          bilibili
        </text>
      </svg>
    ),
  },
  {
    name: 'Microsoft Edge',
    running: true,
    icon: (
      <svg viewBox="0 0 24 24" className="h-6 w-6">
        <circle cx="12" cy="12" r="12" fill="#1b79b8" />
        <path d="M1 8C4-2 20-2 23.500 9c1 5-3 8-7 7-2 0-3-1-2-2 2-4-1-7-5-7-4 0-7 2-8.500 6C0 11 .400 9 1 8z" fill="#3cc4c6" />
        <path d="M15 .500c5 1 9 6 9 11 0 4-4 6-8 5-1-1-2-1-1.500-2C17 10 13 6 10 6c2-3 4-4 5-5.500z" fill="#63d888" />
        <path d="M9 10c-3 4 0 11 8 11 2 0 4-1 5-1-5 6-16 5-18-3-1-5 1-7 5-7z" fill="#11508f" />
        <path d="M14 9c-4-1-6 2-5 5s4 5 9 5l3-1c-3 0-6 0-7-2-1-1 1-2 1-4 0-1 0-2-1-3z" fill="#e1d6ea" />
      </svg>
    ),
  },
  { name: 'NoteExpress', running: true, active: true, icon: <NeLogo className="h-6 w-6" /> },
  {
    name: '录屏',
    running: true,
    icon: (
      <svg viewBox="0 0 24 24" className="h-6 w-6">
        <circle cx="12" cy="12" r="11.300" fill="#0c0909" stroke="#fdfdfd" strokeWidth="1.300" />
        <circle cx="12" cy="12" r="6" fill="#dd2127" />
      </svg>
    ),
  },
]

const Bouquet = () => (
  <svg viewBox="0 0 42 24" className="h-6 w-[42px] shrink-0">
    <path d="M6 10l12 6 18 6M16 10l6 8M26 10l-6 10M35 9L22 20" stroke="#4f9f4b" strokeWidth="1.500" fill="none" />
    <path d="M12 15c5-1 8 1 9 4-4 0-7-1-9-4zM24 22c2-5 6-6 10-6-1 4-5 6-10 6zM18 22l5-3 1 3z" fill="#5fb354" />
    <path d="M1 9c-1-4 3-5 4-2 3-2 5 1 4 3l-5 4z" fill="#d83b4f" />
    <circle cx="15" cy="7" r="5" fill="#ee87ab" />
    <path d="M12 7c0-3 5-3 6 0-1 3-5 3-6 0z" fill="#db5485" />
    <path d="M22 2l3 1 3-2 1 7c-1 3-6 3-7 0z" fill="#e34d77" />
    <path d="M31 4c1-3 4-2 5 0 2-3 6-1 5 2-1 4-4 5-6 5s-5-4-4-7z" fill="#d9364e" />
    <path d="M34 20l7 3" stroke="#e3b98b" strokeWidth="2" />
  </svg>
)

const Taskbar = () => (
  <footer className="grid h-12 shrink-0 grid-cols-[1fr_auto_1fr] border-t border-[#adb6ca] bg-linear-to-r from-[#d8d7ea] via-[#d9d3e9] via-50% to-[#e8cde3]">
    <button className="flex items-center pl-[21px] text-left">
      <svg viewBox="0 0 28 28" className="mb-1.5 h-7 w-7 shrink-0">
        <path d="M1 24l8-7 6 5 7-11v13" fill="none" stroke="#bf4a20" strokeWidth="4" strokeLinejoin="bevel" />
        <path d="M2 24l7-6" stroke="#7d2a17" strokeWidth="4" />
        <circle cx="18" cy="9" r="8.500" fill="#bf1e25" />
        <text x="18" y="13" textAnchor="middle" fontSize="11" fontFamily="Open Sans, sans-serif" fill="#fff">1</text>
      </svg>
      <span className="flex flex-col pl-[3px] leading-4">
        <span>中国移动</span>
        <span className="text-[#c0273c]">+1.39%</span>
      </span>
    </button>

    <div className="flex items-center pl-3">
      <button aria-label="开始">
        <svg viewBox="0 0 24 24" className="h-6 w-6">
          <defs>
            <linearGradient id="win" x1="0" y1="0" x2="1" y2="1">
              <stop offset="0" stopColor="#4fc6f1" />
              <stop offset="1" stopColor="#0f75c5" />
            </linearGradient>
          </defs>
          <path d="M0 0h11.500v11.500H0zM12.500 0H24v11.500H12.500zM0 12.500h11.500V24H0zM12.500 12.500H24V24H12.500z" fill="url(#win)" />
        </svg>
      </button>
      <label className="ml-[15px] flex h-[31px] w-[220px] shrink-0 items-center rounded-full border border-[#cbc8dc] bg-[#f4f5f8] pr-2 pl-2.5">
        <svg viewBox="0 0 16 16" className="h-4 w-4 shrink-0" fill="none" stroke="#1d1d1f" strokeWidth="1.700">
          <circle cx="6.500" cy="6.500" r="5.300" />
          <path d="M10.500 10.500l4.500 5" />
        </svg>
        <input aria-label="搜索" placeholder="搜索" className="ml-2.5 w-full min-w-0 bg-transparent text-sm outline-none placeholder:text-[#5d5d62]" />
        <Bouquet />
      </label>
      <div className="ml-0.5 flex h-full w-[580px]">
        {apps.map((app) => (
          <div key={app.name} className="flex flex-1 items-center justify-center">
            <button
              aria-label={app.name}
              className={clsx('flex h-10 w-[38px] flex-col items-center rounded-md pt-[7px]', app.active && 'bg-[#f1eaf5]')}
            >
              {app.icon}
              {app.running && (
                <span className={clsx('mt-1 h-[3px] shrink-0 rounded-full', app.active ? 'w-4 bg-[#2277bd]' : 'w-1.5 bg-[#84808c]')} />
              )}
            </button>
          </div>
        ))}
      </div>
    </div>

    <div className="flex items-center justify-end pr-[19px] pb-0.5 text-[#26242a]">
      <button aria-label="显示隐藏的图标" className="mr-[18px]">
        <svg viewBox="0 0 12 8" className="h-2 w-3"><path d="M1 7l5-5 5 5" fill="none" stroke="#2b292e" strokeWidth="1.400" /></svg>
      </button>
      <svg viewBox="0 0 18 14" className="mr-[18px] h-3.5 w-[18px]">
        <path d="M4 12.500C0 12 0 7 4 7c1-5 8-5 9-1 5 0 5 6 1 6.500z" fill="#b3aeb0" stroke="#3a383c" />
        <path d="M3 1l13 13" stroke="#2a282c" strokeWidth="1.300" />
      </svg>
      <svg viewBox="0 0 12 18" className="mr-[17px] h-[18px] w-3" fill="none" stroke="#3f68ae" strokeWidth="1.300">
        <rect x="3.500" y="1" width="5" height="10" rx="2.500" />
        <path d="M1 8c0 7 10 7 10 0M6 13.500V17" />
      </svg>
      <span className="mr-4 text-base leading-5">英</span>
      <svg viewBox="0 0 18 14" className="mr-1.5 h-3.5 w-[18px]" fill="none" stroke="#2b292e" strokeWidth="1.300">
        <path d="M1 5.500c5-5 11-5 16 0M3.500 8c4-4 7-4 11 0M6 10.500c2-2 4-2 6 0" />
        <circle cx="9" cy="12" r="1" fill="#2b292e" />
      </svg>
      <svg viewBox="0 0 18 14" className="mr-2 h-3.5 w-[18px]" fill="none" stroke="#2b292e" strokeWidth="1.200">
        <path d="M1.500 5h3l4-3.500v11L4.500 9h-3zM11 5c1 1 1 3 0 4M13 3c2 2 2 6 0 8" />
        <path d="M15 1.500c3 3 3 8 0 11" stroke="#a8a0ad" />
      </svg>
      <svg viewBox="0 0 18 14" className="h-3.5 w-[18px]">
        <rect x="2.500" y="3.500" width="13" height="9" rx="1.500" fill="none" stroke="#222" />
        <rect x="4" y="5" width="10" height="6" fill="#222" />
        <path d="M16 6h1.500v4H16z" fill="#222" />
        <path d="M4 0L1 5h2L2 9l4-5H4l1-4z" fill="#222" />
      </svg>
      <time className="w-[69px] text-right leading-4">14:55<br />2025/2/10</time>
    </div>
  </footer>
)

export default function App() {
  return (
    <div className="relative flex h-screen flex-col overflow-hidden bg-[#d9e8f4] font-['Open_Sans','Noto_Sans_CJK_SC',sans-serif] text-xs text-[#15181b]">
      <header className="flex h-[23px] shrink-0 items-center gap-[5px] bg-[#eff3ee] pl-0.5 text-[#85898a]">
        <NeLogo className="h-4 w-4" />
        <h1 className="leading-4">NoteExpress - 吉林农业大学图书馆版 - C:\Users\ASUS\Documents\NoteExpress\Libraries\示例数据库.ndb</h1>
        <div className="ml-auto"><WindowButtons /></div>
      </header>
      <Toolbar />

      <div className="flex min-h-0 flex-1">
        <Sidebar />
        <div className="flex w-1 shrink-0 items-center justify-center border-x border-[#dceaf4] bg-[#c2d6e7]">
          <span className="h-[60px] border-l-2 border-dotted border-[#8ea6bd]" />
        </div>
        <main className="flex min-w-0 flex-1 flex-col">
          <div className="grid h-[26px] shrink-0 grid-cols-[3fr_1fr] items-center bg-[#b7d1e1] pl-[5px]">
            <h2 className="text-base leading-6 font-bold">题录</h2>
            <span className="leading-4">0 / 0</span>
          </div>
          <table className="w-full table-fixed text-sm leading-5">
            <thead>
              <tr className="h-7 bg-linear-to-b from-[#f3f9fc] to-[#d8e6f2] text-left">
                {columns.map((col, i) => (
                  <th key={i} className={clsx('border-r border-[#b4c4d2] pl-[5px] font-normal', col.width)}>
                    <span className="flex items-center gap-[3px]">
                      {col.label}
                      {col.sorted && (
                        <svg viewBox="0 0 10 6" className="h-1.5 w-2.5"><path d="M0 6h10L5 0z" fill="#80878d" /></svg>
                      )}
                    </span>
                  </th>
                ))}
              </tr>
            </thead>
          </table>
          <div className="flex-1 bg-[#fdfffc]" />
          <DetailPane />
        </main>
      </div>

      <div className="flex h-[25px] shrink-0 items-center justify-end bg-linear-to-b from-[#d6e7f5] via-[#b8d3ed] to-[#d9e8f5]">
        <span className="h-[18px] w-3 border-l border-[#eef6fc]" />
        <span className="h-[18px] w-[17px] border-l border-[#cddff0]" />
        <span className="h-[18px] w-1 border-l border-[#eef6fc]" />
        <svg viewBox="0 0 12 12" className="mr-0.5 h-3 w-3">
          <circle cx="6" cy="6" r="5" fill="#92d426" stroke="#4d8a1b" />
          <path d="M3.500 6l2 2 3-3.500" stroke="#fff" strokeWidth="1.500" fill="none" />
        </svg>
      </div>
      <Taskbar />
      <OptionsDialog />
    </div>
  )
}
